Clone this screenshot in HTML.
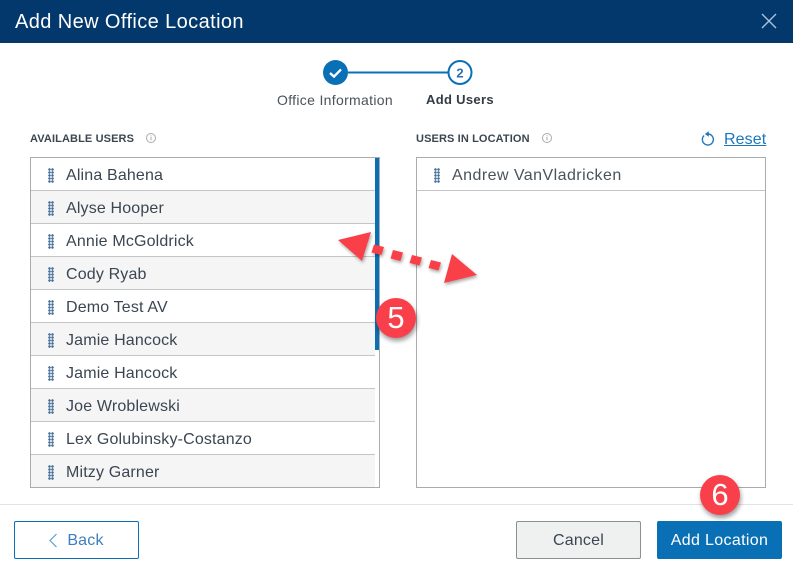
<!DOCTYPE html>
<html><head><meta charset="utf-8">
<style>
html,body{margin:0;padding:0;background:#fff}
#p{position:relative;width:793px;height:571px;overflow:hidden;background:#fff;font-family:"Liberation Sans",sans-serif;color:#3c4650}
.a{position:absolute;white-space:nowrap}
.box{position:absolute;top:157px;height:329px;border:1px solid #a9abad;background:#fff}
.r{position:absolute;left:0;width:344px;height:32px;border-bottom:1px solid #c4c5c6;line-height:35px;font-size:16px;letter-spacing:.16px;color:#3b4652}
.r.g{background:#f5f5f5}
.r b{position:absolute;left:17px;top:10px;width:6px;height:15px;background-image:radial-gradient(circle,#47709a 1.2px,transparent 1.4px);background-size:3px 3px}
.r span{position:absolute;left:35px;top:0}
.lb{font-size:11px;font-weight:bold;color:#3c4650;letter-spacing:.12px}
.c{position:absolute;width:40px;height:40px;border-radius:50%;background:#f9404a;color:#fff;font-size:31px;line-height:40px;text-align:center;box-shadow:1px 3px 5px rgba(0,0,0,.4)}
.btn{position:absolute;top:521px;height:38px;line-height:40px;text-align:center;border-radius:2px;font-size:16px;letter-spacing:.2px;box-sizing:border-box}
</style></head><body>
<div id="p">
<div class="a" style="left:0;top:0;width:793px;height:43px;background:#03386c"></div>
<div class="a" style="left:15px;top:10px;font-size:20px;line-height:24px;color:#fff;letter-spacing:.4px">Add New Office Location</div>
<svg class="a" style="left:760px;top:12px" width="18" height="18" viewBox="0 0 18 18"><path d="M2 2L16 16M16 2L2 16" stroke="#a7c3dd" stroke-width="1.4" fill="none"/></svg>

<svg class="a" style="left:320px;top:58px" width="156" height="30" viewBox="0 0 156 30">
<path d="M28 14.500H129" stroke="#0a70b6" stroke-width="2"/>
<circle cx="15.500" cy="14.500" r="12.500" fill="#0a70b6"/>
<path d="M10 15l4 3.600 7-7.200" stroke="#fff" stroke-width="2.300" fill="none"/>
<circle cx="140" cy="14.500" r="11.500" fill="#fff" stroke="#0a70b6" stroke-width="2"/>
<text x="140" y="19.500" text-anchor="middle" font-family="Liberation Sans" font-size="13" font-weight="bold" fill="#2f6fb0">2</text>
</svg>
<div class="a" style="left:277px;top:92px;font-size:14px;line-height:16px;color:#4a525a;letter-spacing:.32px">Office Information</div>
<div class="a" style="left:426px;top:92px;font-size:13px;line-height:16px;font-weight:bold;color:#333b44;letter-spacing:.32px">Add Users</div>

<div class="a lb" style="left:30px;top:132px;line-height:14px">AVAILABLE USERS</div>
<svg class="a" style="left:145px;top:132px" width="12" height="12" viewBox="0 0 12 12"><circle cx="6" cy="6" r="4.500" stroke="#aaa" fill="none"/><path d="M6 5v3.400M6 3.400v1" stroke="#aaa"/></svg>
<div class="a lb" style="left:416px;top:132px;line-height:14px">USERS IN LOCATION</div>
<svg class="a" style="left:541px;top:132px" width="12" height="12" viewBox="0 0 12 12"><circle cx="6" cy="6" r="4.500" stroke="#aaa" fill="none"/><path d="M6 5v3.400M6 3.400v1" stroke="#aaa"/></svg>
<svg class="a" style="left:700px;top:131px" width="16" height="16" viewBox="0 0 16 16"><path d="M4.100 4.500A5.500 5.500 0 1 0 8 3" stroke="#1f78bd" stroke-width="1.400" fill="none"/><path d="M8.800 0.300V5.700L4.800 3z" fill="#1f78bd"/></svg>
<div class="a" style="left:724px;top:131px;font-size:16px;line-height:18px;color:#1877bd;text-decoration:underline;letter-spacing:.1px">Reset</div>

<div class="box" style="left:30px;width:348px;overflow:hidden">
<div class="r" style="top:0"><b></b><span>Alina Bahena</span></div>
<div class="r g" style="top:33px"><b></b><span>Alyse Hooper</span></div>
<div class="r" style="top:66px"><b></b><span>Annie McGoldrick</span></div>
<div class="r g" style="top:99px"><b></b><span>Cody Ryab</span></div>
<div class="r" style="top:132px"><b></b><span>Demo Test AV</span></div>
<div class="r g" style="top:165px"><b></b><span>Jamie Hancock</span></div>
<div class="r" style="top:198px"><b></b><span>Jamie Hancock</span></div>
<div class="r g" style="top:231px"><b></b><span>Joe Wroblewski</span></div>
<div class="r" style="top:264px"><b></b><span>Lex Golubinsky-Costanzo</span></div>
<div class="r g" style="top:297px;border-bottom:0"><b></b><span>Mitzy Garner</span></div>
</div>
<div class="a" style="left:375px;top:158px;width:4px;height:192px;background:#0a70b6"></div>

<div class="box" style="left:416px;width:348px">
<div class="r" style="width:348px"><b></b><span style="color:#4a525a;letter-spacing:.45px">Andrew VanVladricken</span></div>
</div>

<svg class="a" style="left:330px;top:225px;overflow:visible" width="160" height="70" viewBox="330 225 160 70">
<defs><filter id="s" x="-20%" y="-30%" width="140%" height="170%"><feDropShadow dx="1" dy="2" stdDeviation="1.500" flood-color="#000" flood-opacity=".35"/></filter></defs>
<g fill="#f9404a" filter="url(#s)">
<path d="M338 240L371 232L362 261Z"/>
<path d="M452 254L477 275L444 283Z"/>
<path d="M374 244.500L384 247L381.500 255L371.500 252.500Z"/>
<path d="M393 250L403 252.500L400.500 261L390.500 258.500Z"/>
<path d="M412 255L422 257.500L419.500 265.500L409.500 263Z"/>
<path d="M431 260L441 262.500L438.500 270.500L428.500 268Z"/>
</g></svg>

<div class="c" style="left:376px;top:298px">5</div>

<div class="a" style="left:0;top:504px;width:793px;height:1px;background:#e2e3e8"></div>

<div class="btn" style="left:14px;width:125px;border:1px solid #0a70b6;color:#3f7fbd;background:#fff;padding-left:18px;line-height:38px">Back</div>
<svg class="a" style="left:48px;top:533px" width="10" height="15" viewBox="0 0 10 15"><path d="M8.500 1L2 7.500L8.500 14" stroke="#5a9ccf" stroke-width="1.200" fill="none"/></svg>
<div class="btn" style="left:516px;width:125px;border:1px solid #8c8f93;background:#eff0f0;color:#3b4652;line-height:38px">Cancel</div>
<div class="btn" style="left:657px;width:125px;background:#0a70b6;color:#fff;letter-spacing:.34px">Add Location</div>

<div class="c" style="left:700px;top:475px">6</div>
</div>
</body></html>
